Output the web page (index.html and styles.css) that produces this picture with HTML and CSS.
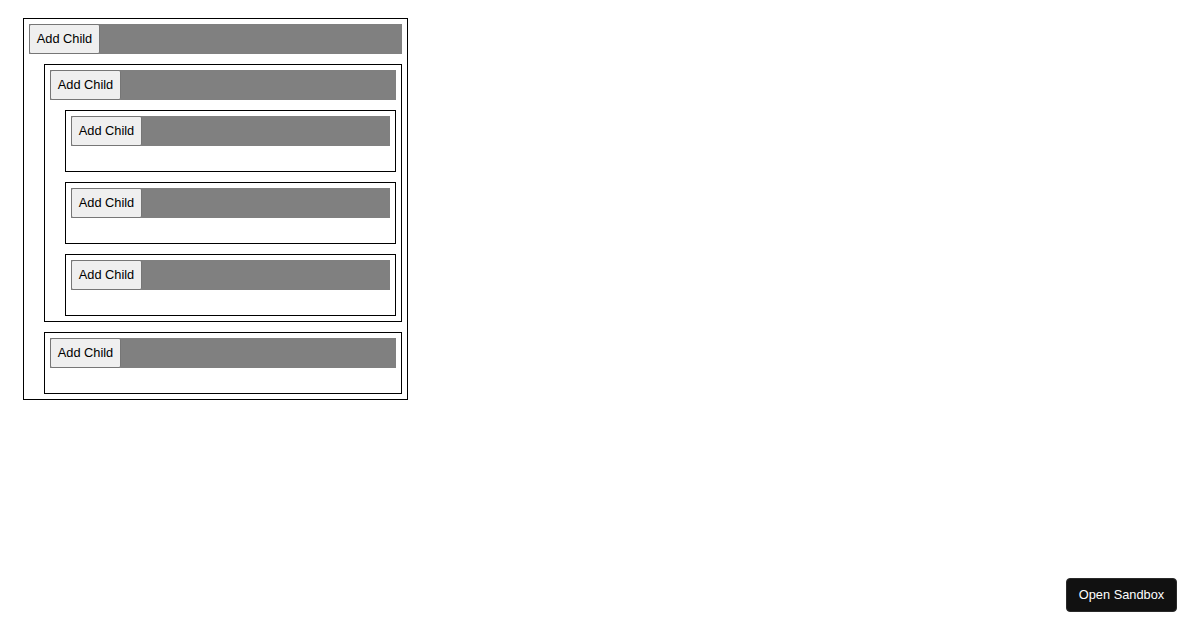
FILE: index.html
```html
<!DOCTYPE html>
<html>
<head>
<meta charset="utf-8">
<link rel="stylesheet" href="styles.css">
</head>
<body>
<div class="page">
  <div class="node root">
    <div class="bar"><button class="add">Add Child</button></div>
    <div class="children">
      <div class="node">
        <div class="bar"><button class="add">Add Child</button></div>
        <div class="children">
          <div class="node">
            <div class="bar"><button class="add">Add Child</button></div>
            <div class="children"></div>
          </div>
          <div class="node">
            <div class="bar"><button class="add">Add Child</button></div>
            <div class="children"></div>
          </div>
          <div class="node">
            <div class="bar"><button class="add">Add Child</button></div>
            <div class="children"></div>
          </div>
        </div>
      </div>
      <div class="node">
        <div class="bar"><button class="add">Add Child</button></div>
        <div class="children"></div>
      </div>
    </div>
  </div>
</div>
<button class="sandbox">Open Sandbox</button>
</body>
</html>
```
FILE: styles.css
```css
html, body {
  margin: 0;
  padding: 0;
  background: #fff;
}
body {
  font-family: "Liberation Sans", Arial, sans-serif;
}
.page {
  padding: 18px 0 0 23px;
}
.node {
  border: 1px solid #000;
  padding: 5px;
  box-sizing: border-box;
}
.root {
  width: 385px;
}
.bar {
  background: #808080;
  height: 30px;
  display: flex;
}
.add {
  font-family: "Liberation Sans", Arial, sans-serif;
  font-size: 12.8px;
  color: #000;
  background: #efefef;
  border: 1px solid #767676;
  border-radius: 2px;
  padding: 0 0 1px;
  height: 30px;
  width: 71px;
  margin: 0;
  box-sizing: border-box;
  white-space: nowrap;
}
.children {
  display: flex;
  flex-direction: column;
  gap: 10px;
  padding: 10px 0 0 15px;
  min-height: 20px;
  box-sizing: border-box;
}
.sandbox {
  position: fixed;
  right: 23px;
  bottom: 18px;
  width: 111px;
  height: 34px;
  background: #111;
  color: #fff;
  border: 1px solid #2a2a2a;
  border-radius: 4px;
  font-family: "Liberation Sans", Arial, sans-serif;
  font-size: 12.8px;
  padding: 0 0 2px;
}
```
